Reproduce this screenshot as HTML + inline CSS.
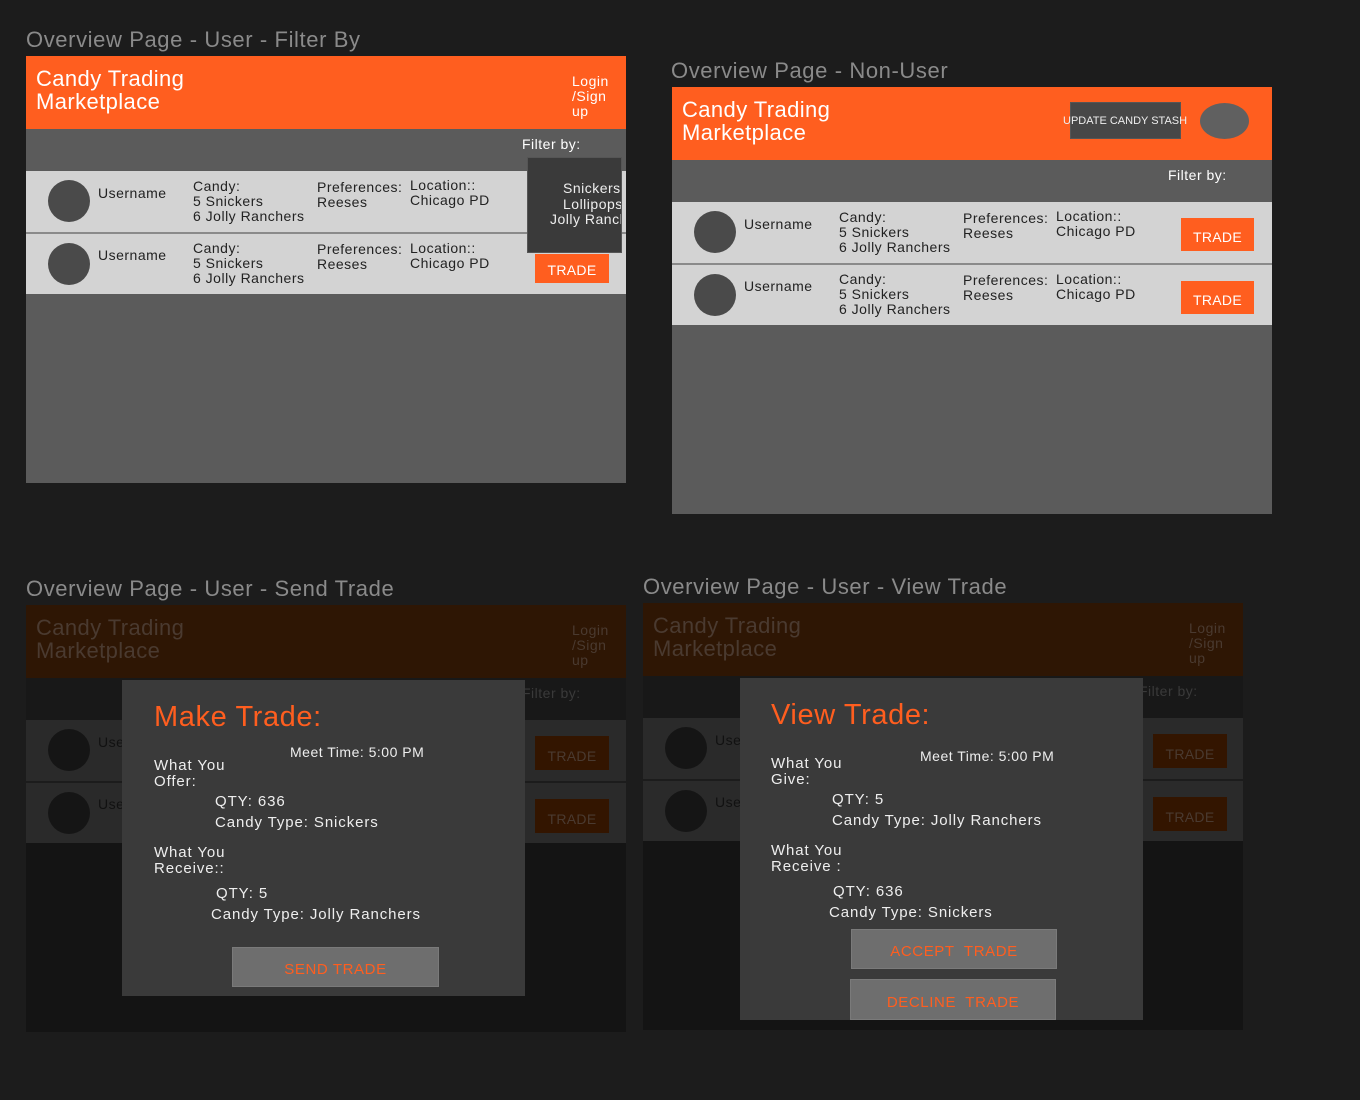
<!DOCTYPE html>
<html><head><meta charset="utf-8"><style>
*{margin:0;padding:0;box-sizing:border-box}
body{width:1360px;height:1100px;background:#1c1c1c;font-family:"Liberation Sans",sans-serif;position:relative;overflow:hidden;color:#222}
div,span{position:absolute}
.t{font-size:14px;line-height:15px;white-space:nowrap;letter-spacing:0.5px}
.cap{font-size:22px;color:#8a8a8a;white-space:nowrap;letter-spacing:0.6px}
.title{font-size:22px;line-height:23px;color:#fff;white-space:nowrap;letter-spacing:0.4px}
.av{width:42px;height:42px;border-radius:50%;background:#4a4a4a}
.btn{background:#ff5e1f;color:#fff;font-size:14px;text-align:center;letter-spacing:0.3px}
.p{overflow:hidden}
.mw{color:#eee;font-size:15px;line-height:16px;white-space:nowrap;letter-spacing:0.9px}
.gb{background:#6e6e6e;border:1px solid #7a7a7a;color:#ff5e1f;font-size:15px;text-align:center;letter-spacing:0.6px}
.mt{font-size:29px;color:#ff5e1f;white-space:nowrap;letter-spacing:0.6px}
</style></head><body>

<span class="cap" style="left:26px;top:27px">Overview Page - User - Filter By</span>
<span class="cap" style="left:671px;top:58px">Overview Page - Non-User</span>
<span class="cap" style="left:26px;top:576px">Overview Page - User - Send Trade</span>
<span class="cap" style="left:643px;top:574px">Overview Page - User - View Trade</span>

<div class="p" style="left:26px;top:56px;width:600px;height:427px;background:#5b5b5b">
 <div style="left:0;top:0;width:600px;height:73px;background:#ff5e1f"></div>
 <span class="title" style="left:10px;top:11px">Candy Trading<br>Marketplace</span>
 <span class="t" style="left:546px;top:18px;color:#fff">Login<br>/Sign<br>up</span>
 <span class="t" style="left:496px;top:81px;color:#fff">Filter by:</span>
 <div style="left:0;top:115px;width:600px;height:61px;background:#d3d3d3"></div>
 <div style="left:0;top:176px;width:600px;height:2px;background:#8a8a8a"></div>
 <div style="left:0;top:178px;width:600px;height:60px;background:#d3d3d3"></div>
 <div class="av" style="left:22px;top:124px"></div>
 <div class="av" style="left:22px;top:187px"></div>
 <span class="t" style="left:72px;top:130px">Username</span>
 <span class="t" style="left:72px;top:192px">Username</span>
 <span class="t" style="left:167px;top:123px">Candy:<br>5 Snickers<br>6 Jolly Ranchers</span>
 <span class="t" style="left:167px;top:185px">Candy:<br>5 Snickers<br>6 Jolly Ranchers</span>
 <span class="t" style="left:291px;top:124px">Preferences:<br>Reeses</span>
 <span class="t" style="left:291px;top:186px">Preferences:<br>Reeses</span>
 <span class="t" style="left:384px;top:122px">Location::<br>Chicago PD</span>
 <span class="t" style="left:384px;top:185px">Location::<br>Chicago PD</span>
 <div class="btn" style="left:509px;top:198px;width:74px;height:29px;line-height:32px">TRADE</div>
 <div style="left:501px;top:101px;width:95px;height:96px;background:#3a3a3a;border:1px solid #555;overflow:hidden">
  <span class="t" style="left:35px;top:22px;color:#eee;line-height:16px">Snickers</span>
  <span class="t" style="left:35px;top:38px;color:#eee;line-height:16px">Lollipops</span>
  <span class="t" style="left:22px;top:53px;color:#eee;line-height:16px">Jolly Ranchers</span>
 </div>
</div>

<div class="p" style="left:672px;top:87px;width:600px;height:427px;background:#5b5b5b">
 <div style="left:0;top:0;width:600px;height:73px;background:#ff5e1f"></div>
 <span class="title" style="left:10px;top:11px">Candy Trading<br>Marketplace</span>
 <div style="left:398px;top:15px;width:111px;height:37px;background:#474747;border:1px solid #555"></div>
 <span style="left:391px;top:28px;font-size:11px;color:#eee;white-space:nowrap">UPDATE CANDY STASH</span>
 <div style="left:528px;top:16px;width:49px;height:36px;border-radius:50%;background:#606060"></div>
 <span class="t" style="left:496px;top:81px;color:#fff">Filter by:</span>
 <div style="left:0;top:115px;width:600px;height:61px;background:#d3d3d3"></div>
 <div style="left:0;top:176px;width:600px;height:2px;background:#8a8a8a"></div>
 <div style="left:0;top:178px;width:600px;height:60px;background:#d3d3d3"></div>
 <div class="av" style="left:22px;top:124px"></div>
 <div class="av" style="left:22px;top:187px"></div>
 <span class="t" style="left:72px;top:130px">Username</span>
 <span class="t" style="left:72px;top:192px">Username</span>
 <span class="t" style="left:167px;top:123px">Candy:<br>5 Snickers<br>6 Jolly Ranchers</span>
 <span class="t" style="left:167px;top:185px">Candy:<br>5 Snickers<br>6 Jolly Ranchers</span>
 <span class="t" style="left:291px;top:124px">Preferences:<br>Reeses</span>
 <span class="t" style="left:291px;top:186px">Preferences:<br>Reeses</span>
 <span class="t" style="left:384px;top:122px">Location::<br>Chicago PD</span>
 <span class="t" style="left:384px;top:185px">Location::<br>Chicago PD</span>
 <div class="btn" style="left:509px;top:131px;width:73px;height:33px;line-height:38px">TRADE</div>
 <div class="btn" style="left:509px;top:194px;width:73px;height:33px;line-height:38px">TRADE</div>
</div>

<div class="p" style="left:26px;top:605px;width:600px;height:427px;background:#141414">
 <div style="left:0;top:0;width:600px;height:73px;background:#2e1604"></div>
 <span class="title" style="left:10px;top:11px;color:#4a3a30">Candy Trading<br>Marketplace</span>
 <span class="t" style="left:546px;top:18px;color:#4a3a30">Login<br>/Sign<br>up</span>
 <div style="left:0;top:73px;width:600px;height:42px;background:#181818"></div>
 <span class="t" style="left:496px;top:81px;color:#3a3a3a">Filter by:</span>
 <div style="left:0;top:115px;width:600px;height:61px;background:#2a2a2a"></div>
 <div style="left:0;top:176px;width:600px;height:2px;background:#1c1c1c"></div>
 <div style="left:0;top:178px;width:600px;height:60px;background:#2a2a2a"></div>
 <div class="av" style="left:22px;top:124px;background:#151515"></div>
 <div class="av" style="left:22px;top:187px;background:#151515"></div>
 <span class="t" style="left:72px;top:130px;color:#111">Username</span>
 <span class="t" style="left:72px;top:192px;color:#111">Username</span>
 <div class="btn" style="left:509px;top:131px;width:74px;height:34px;line-height:40px;background:#331500;color:#4a3a30">TRADE</div>
 <div class="btn" style="left:509px;top:194px;width:74px;height:34px;line-height:40px;background:#331500;color:#4a3a30">TRADE</div>
</div>
<div style="left:122px;top:680px;width:403px;height:316px;background:#3a3a3a"></div>
<span class="mt" style="left:154px;top:701px">Make Trade:</span>
<span class="mw" style="left:290px;top:744px;font-size:14px;letter-spacing:0.5px">Meet Time: 5:00 PM</span>
<span class="mw" style="left:154px;top:758px">What You<br>Offer:</span>
<span class="mw" style="left:215px;top:794px">QTY: 636</span>
<span class="mw" style="left:215px;top:815px">Candy Type: Snickers</span>
<span class="mw" style="left:154px;top:845px">What You<br>Receive::</span>
<span class="mw" style="left:216px;top:886px">QTY: 5</span>
<span class="mw" style="left:211px;top:907px">Candy Type: Jolly Ranchers</span>
<div class="gb" style="left:232px;top:947px;width:207px;height:40px;line-height:44px">SEND TRADE</div>

<div class="p" style="left:643px;top:603px;width:600px;height:427px;background:#141414">
 <div style="left:0;top:0;width:600px;height:73px;background:#2e1604"></div>
 <span class="title" style="left:10px;top:11px;color:#4a3a30">Candy Trading<br>Marketplace</span>
 <span class="t" style="left:546px;top:18px;color:#4a3a30">Login<br>/Sign<br>up</span>
 <div style="left:0;top:73px;width:600px;height:42px;background:#181818"></div>
 <span class="t" style="left:496px;top:81px;color:#3a3a3a">Filter by:</span>
 <div style="left:0;top:115px;width:600px;height:61px;background:#2a2a2a"></div>
 <div style="left:0;top:176px;width:600px;height:2px;background:#1c1c1c"></div>
 <div style="left:0;top:178px;width:600px;height:60px;background:#2a2a2a"></div>
 <div class="av" style="left:22px;top:124px;background:#151515"></div>
 <div class="av" style="left:22px;top:187px;background:#151515"></div>
 <span class="t" style="left:72px;top:130px;color:#111">Username</span>
 <span class="t" style="left:72px;top:192px;color:#111">Username</span>
 <div class="btn" style="left:510px;top:131px;width:74px;height:34px;line-height:40px;background:#331500;color:#4a3a30">TRADE</div>
 <div class="btn" style="left:510px;top:194px;width:74px;height:34px;line-height:40px;background:#331500;color:#4a3a30">TRADE</div>
</div>
<div style="left:740px;top:678px;width:403px;height:342px;background:#3a3a3a"></div>
<span class="mt" style="left:771px;top:699px">View Trade:</span>
<span class="mw" style="left:920px;top:748px;font-size:14px;letter-spacing:0.5px">Meet Time: 5:00 PM</span>
<span class="mw" style="left:771px;top:756px">What You<br>Give:</span>
<span class="mw" style="left:832px;top:792px">QTY: 5</span>
<span class="mw" style="left:832px;top:813px">Candy Type: Jolly Ranchers</span>
<span class="mw" style="left:771px;top:843px">What You<br>Receive :</span>
<span class="mw" style="left:833px;top:884px">QTY: 636</span>
<span class="mw" style="left:829px;top:905px">Candy Type: Snickers</span>
<div class="gb" style="left:851px;top:929px;width:206px;height:40px;line-height:44px">ACCEPT&nbsp; TRADE</div>
<div class="gb" style="left:850px;top:979px;width:206px;height:41px;line-height:46px">DECLINE&nbsp; TRADE</div>

</body></html>
